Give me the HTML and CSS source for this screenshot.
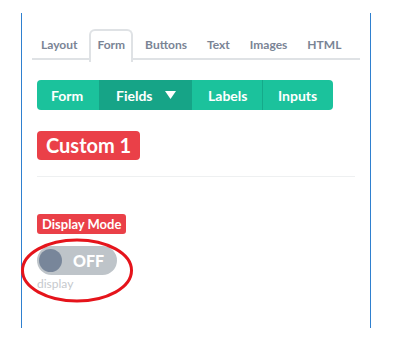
FILE: index.html
```html
<!DOCTYPE html>
<html>
<head>
<meta charset="utf-8">
<link rel="stylesheet" href="styles.css">
</head>
<body>
<div class="panel">
  <ul class="tabs">
    <li class="tab">Layout</li>
    <li class="tab active">Form</li>
    <li class="tab">Buttons</li>
    <li class="tab">Text</li>
    <li class="tab">Images</li>
    <li class="tab">HTML</li>
  </ul>
  <div class="content">
    <div class="btn-group">
      <span class="btn btn-form">Form</span>
      <span class="btn btn-fields">Fields <svg class="caret" width="11" height="8" viewBox="0 0 11 8"><polygon points="0,0 11,0 5.5,8" fill="#fff"/></svg></span>
      <span class="btn btn-labels">Labels</span>
      <span class="btn btn-inputs">Inputs</span>
    </div>
    <div class="label-big">Custom 1</div>
    <div class="divider"></div>
    <div class="label-small">Display Mode</div>
    <div class="switch-wrap">
      <div class="switch">
        <span class="knob"></span>
        <span class="off">OFF</span>
      </div>
      <div class="hint">display</div>
      <svg class="annot" width="118" height="69" viewBox="0 0 118 69"><ellipse cx="59" cy="34.5" rx="54.5" ry="30.5" fill="none" stroke="#e5141b" stroke-width="3"/></svg>
    </div>
  </div>
</div>
</body>
</html>
```
FILE: styles.css
```css
* { box-sizing: border-box; }
html, body { margin: 0; padding: 0; background: #fff; }
body { font-family: Lato, "Open Sans", sans-serif; }
.panel {
  margin: 13px 0 0 21px;
  width: 350px;
  height: 315px;
  border-left: 1px solid #2f80cf;
  border-right: 1px solid #2f80cf;
  padding: 16px 10px 0 10px;
}
.tabs {
  list-style: none;
  margin: 0;
  padding: 0 0 0 1px;
  display: flex;
  border-bottom: 2px solid #dfe2e5;
  height: 31px;
}
.tab {
  font-size: 12px;
  font-weight: 700;
  color: #7a8495;
  padding: 0 6px;
  margin-right: 4px;
  height: 31px;
  line-height: 27px;
  border: 2px solid transparent;
  border-bottom: none;
  border-radius: 6px 6px 0 0;
}
.tab.active {
  border-color: #dfe2e5;
  background: #fff;
  margin-bottom: -2px;
  height: 33px;
}
.content { padding: 0 5px; display: flex; flex-direction: column; align-items: flex-start; }
.btn-group {
  margin-top: 20px;
  display: flex;
  height: 30px;
  border-radius: 4px;
  overflow: hidden;
}
.btn {
  display: flex;
  align-items: center;
  color: #fff;
  font-weight: 700;
  font-size: 14px;
  background: #1bc29c;
  height: 30px;
}
.btn-form { width: 62px; padding-left: 14px; }
.btn-fields { width: 93px; padding-left: 17px; background: #16a487; }
.caret { margin-left: 12px; }
.btn-labels { width: 70px; padding-left: 16px; }
.btn-inputs { width: 71px; padding-left: 15px; border-left: 1px solid #15aa8a; }
.label-big {
  margin-top: 21px;
  background: #ea4048;
  color: #fff;
  font-weight: 700;
  font-size: 20px;
  height: 29px;
  line-height: 29px;
  padding: 0 9px;
  border-radius: 4px;
}
.divider { margin-top: 16px; width: 318px; height: 1px; background: #eef0f1; }
.label-small {
  margin-top: 37px;
  background: #ea4048;
  color: #fff;
  font-weight: 700;
  font-size: 13px;
  height: 20px;
  line-height: 20px;
  padding: 0 5px;
  border-radius: 3px;
}
.switch-wrap { position: relative; margin-top: 12px; }
.switch {
  width: 80px;
  height: 29px;
  border-radius: 15px;
  background: #bec4c9;
  display: flex;
  align-items: center;
  padding-left: 2px;
}
.knob { width: 23px; height: 23px; border-radius: 50%; background: #78869a; }
.off { margin-left: 11px; color: #fff; font-weight: 900; font-size: 16px; }
.hint { color: #c6c9cd; font-size: 12px; margin-top: 2px; line-height: 14px; }
.annot { position: absolute; left: -19px; top: -10px; }
```
